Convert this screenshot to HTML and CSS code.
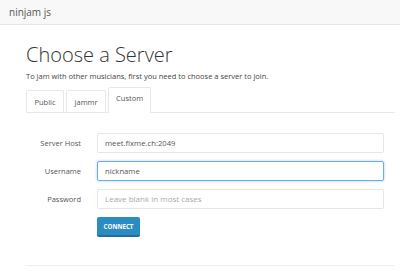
FILE: index.html
```html
<!DOCTYPE html>
<html>
<head>
<meta charset="utf-8">
<link rel="stylesheet" href="styles.css">
</head>
<body>
<nav class="navbar"><span class="brand">ninjam js</span></nav>
<main class="page">
  <h1 class="title">Choose a Server</h1>
  <p class="lead">To jam with other musicians, first you need to choose a server to join.</p>
  <ul class="tabs">
    <li class="tab">Public</li>
    <li class="tab">jammr</li>
    <li class="tab active">Custom</li>
  </ul>
  <form class="form">
    <div class="row">
      <label class="label">Server Host</label>
      <input class="field" type="text" value="meet.fixme.ch:2049">
    </div>
    <div class="row">
      <label class="label">Username</label>
      <input class="field focused" type="text" value="nickname">
    </div>
    <div class="row">
      <label class="label">Password</label>
      <input class="field" type="password" placeholder="Leave blank in most cases">
    </div>
    <div class="row">
      <span class="label"></span>
      <button class="btn" type="button">CONNECT</button>
    </div>
  </form>
  <div class="footer-line"></div>
</main>
</body>
</html>
```

FILE: styles.css
```css
* { box-sizing: border-box; }
html, body { margin: 0; padding: 0; background: #fff; }
body { font-family: "Open Sans", "DejaVu Sans", sans-serif; color: #444; }

.navbar {
  height: 25px;
  background: #f8f8f8;
  border-bottom: 1px solid #e7e7e7;
  display: flex;
  align-items: center;
  padding-left: 9px;
}
.brand { font-size: 10px; color: #555; }

.page { margin-left: 26px; width: 369px; }

.title {
  margin: 19px 0 0;
  font-size: 20px;
  font-weight: 300;
  line-height: 22px;
  color: #333;
}
.lead {
  margin: 5px 0 0;
  font-size: 7.5px;
  line-height: 10px;
  color: #444;
}

.tabs {
  list-style: none;
  margin: 6px 0 0;
  padding: 0;
  display: flex;
  align-items: flex-end;
  gap: 2px;
  border-bottom: 1px solid #e8e8e8;
  height: 26px;
}
.tab {
  font-size: 7.5px;
  color: #555;
  height: 22px;
  padding: 0 7.5px;
  display: flex;
  align-items: center;
  border: 1px solid #e8e8e8;
  border-bottom: none;
  border-radius: 2px 2px 0 0;
}
.tab.active {
  height: 26px;
  margin-bottom: -1px;
  padding: 0 7px 5px;
  background: #fff;
}

.form {
  margin-top: 20px;
  display: flex;
  flex-direction: column;
  gap: 8px;
}
.row { display: flex; align-items: center; gap: 16px; }
.label {
  width: 55px;
  flex: none;
  text-align: right;
  font-size: 7.5px;
  color: #555;
}
.field {
  width: 287px;
  height: 20px;
  padding: 0 7px;
  border: 1px solid #e6e6e6;
  border-radius: 2px;
  font-family: "Open Sans", "DejaVu Sans", sans-serif;
  font-size: 7.7px;
  color: #555;
  background: #fff;
  outline: none;
}
.field::placeholder { color: #aaa; font-size: 8px; }
.field.focused {
  border-color: #66afe9;
  box-shadow: 0 0 3px rgba(102, 175, 233, 0.6);
}
.btn {
  width: 43px;
  height: 20px;
  padding: 0;
  border: none;
  border-bottom: 2px solid #1f6e9e;
  border-radius: 2px;
  background: #2b8cc4;
  color: #fff;
  font-family: "Open Sans", "DejaVu Sans", sans-serif;
  font-size: 6.2px;
  font-weight: 700;
}
.footer-line {
  margin-top: 28px;
  border-top: 1px solid #efefef;
}
```
